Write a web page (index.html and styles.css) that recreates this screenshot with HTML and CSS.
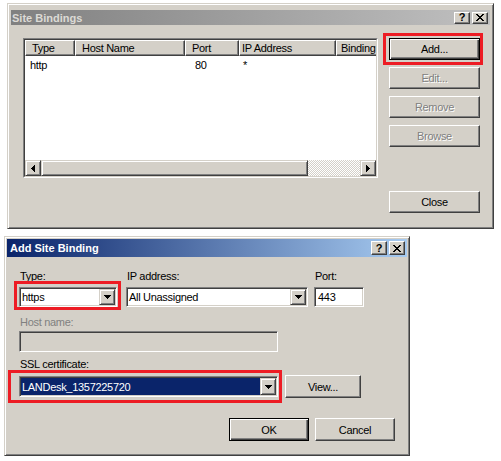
FILE: index.html
```html
<!DOCTYPE html>
<html>
<head>
    <meta charset="utf-8">
    <title>Site Bindings</title>
    <link rel="stylesheet" href="styles.css">
</head>
<body>
    <div class="window bindings-window">
        <div class="caption inactive">
            <span class="caption-title">Site Bindings</span>
            <div class="caption-buttons">
                <span class="cap-btn help">?</span>
                <span class="cap-btn">
                    <svg width="8" height="7" viewBox="0 0 8 7"><path d="M0 0h2v1h-2zM6 0h2v1h-2zM1 1h2v1h-2zM5 1h2v1h-2zM2 2h4v1h-4zM3 3h2v1h-2zM2 4h4v1h-4zM1 5h2v1h-2zM5 5h2v1h-2zM0 6h2v1h-2zM6 6h2v1h-2z" fill="#000"/></svg>
                </span>
            </div>
        </div>

        <div class="bindings-body">
            <div class="listview">
                <div class="lv-inner">
                    <div class="lv-header">
                        <div class="lv-col col-type">Type</div>
                        <div class="lv-col col-host">Host Name</div>
                        <div class="lv-col col-port">Port</div>
                        <div class="lv-col col-ip">IP Address</div>
                        <div class="lv-col col-binding">Binding</div>
                    </div>
                    <div class="lv-rows">
                        <div class="lv-row">
                            <div class="lv-cell col-type">http</div>
                            <div class="lv-cell col-host"></div>
                            <div class="lv-cell col-port">80</div>
                            <div class="lv-cell col-ip">*</div>
                            <div class="lv-cell col-binding"></div>
                        </div>
                    </div>
                    <div class="hscroll">
                        <span class="scroll-btn">
                            <svg width="4" height="7" viewBox="0 0 4 7"><path d="M3 0h1v7h-1v-1h-1v-1h-1v-1h-1v-1h1v-1h1v-1h1z" fill="#000"/></svg>
                        </span>
                        <span class="scroll-thumb"></span>
                        <span class="scroll-track"></span>
                        <span class="scroll-btn">
                            <svg width="4" height="7" viewBox="0 0 4 7"><path d="M0 0h1v1h1v1h1v1h1v1h-1v1h-1v1h-1v1h-1z" fill="#000"/></svg>
                        </span>
                    </div>
                </div>
            </div>

            <div class="button-column">
                <div class="btn default">Add...</div>
                <div class="btn disabled">Edit...</div>
                <div class="btn disabled">Remove</div>
                <div class="btn disabled">Browse</div>
                <div class="btn close-btn">Close</div>
            </div>
        </div>

        <div class="callout add-callout"></div>
    </div>

    <div class="window add-window">
        <div class="caption active">
            <span class="caption-title">Add Site Binding</span>
            <div class="caption-buttons">
                <span class="cap-btn help">?</span>
                <span class="cap-btn">
                    <svg width="8" height="7" viewBox="0 0 8 7"><path d="M0 0h2v1h-2zM6 0h2v1h-2zM1 1h2v1h-2zM5 1h2v1h-2zM2 2h4v1h-4zM3 3h2v1h-2zM2 4h4v1h-4zM1 5h2v1h-2zM5 5h2v1h-2zM0 6h2v1h-2zM6 6h2v1h-2z" fill="#000"/></svg>
                </span>
            </div>
        </div>

        <div class="add-body">
            <div class="field-row">
                <div class="field type-field">
                    <div class="label">Type:</div>
                    <div class="combo">
                        <span class="combo-text">https</span>
                        <span class="drop-btn"><svg width="7" height="4" viewBox="0 0 7 4"><path d="M0 0h7v1h-1v1h-1v1h-1v1h-1v-1h-1v-1h-1v-1h-1z" fill="#000"/></svg></span>
                    </div>
                </div>
                <div class="field ip-field">
                    <div class="label">IP address:</div>
                    <div class="combo">
                        <span class="combo-text">All Unassigned</span>
                        <span class="drop-btn"><svg width="7" height="4" viewBox="0 0 7 4"><path d="M0 0h7v1h-1v1h-1v1h-1v1h-1v-1h-1v-1h-1v-1h-1z" fill="#000"/></svg></span>
                    </div>
                </div>
                <div class="field port-field">
                    <div class="label">Port:</div>
                    <div class="textbox">443</div>
                </div>
            </div>

            <div class="label disabled-label host-label">Host name:</div>
            <div class="textbox disabled host-box"></div>

            <div class="label ssl-label">SSL certificate:</div>
            <div class="ssl-row">
                <div class="combo ssl-combo">
                    <span class="combo-text selected">LANDesk_1357225720</span>
                    <span class="drop-btn"><svg width="7" height="4" viewBox="0 0 7 4"><path d="M0 0h7v1h-1v1h-1v1h-1v1h-1v-1h-1v-1h-1v-1h-1z" fill="#000"/></svg></span>
                </div>
                <div class="btn view-btn">View...</div>
            </div>

            <div class="dialog-buttons">
                <div class="btn default ok-btn">OK</div>
                <div class="btn cancel-btn">Cancel</div>
            </div>
        </div>

        <div class="callout type-callout"></div>
        <div class="callout ssl-callout"></div>
    </div>
</body>
</html>
```

FILE: styles.css
```css
* {
    box-sizing: border-box;
}

body {
    margin: 0;
    width: 501px;
    height: 461px;
    overflow: hidden;
    background: #fff;
    font-family: "Liberation Sans", Arial, sans-serif;
    font-size: 11px;
    letter-spacing: -0.3px;
    color: #000;
}

/* classic window frame */
.window {
    position: relative;
    background: #d4d0c8;
    border: 1px solid;
    border-color: #d4d0c8 #404040 #404040 #d4d0c8;
    box-shadow: inset 1px 1px #fff, inset -1px -1px #808080;
}

.bindings-window {
    margin: 3px 0 0 7px;
    width: 487px;
    height: 226px;
    padding: 6px 3px 2px 3px;
}

.add-window {
    margin: 7px 0 0 4px;
    width: 406px;
    height: 220px;
    padding: 2px;
}

.caption {
    display: flex;
    align-items: center;
    justify-content: space-between;
    font-weight: bold;
    letter-spacing: 0;
    white-space: nowrap;
}

.caption.inactive {
    height: 15px;
    padding: 0 2px 0 1px;
    color: #dcdad5;
    background: linear-gradient(to right, #808080, #c0c0c0);
}

.caption.active {
    height: 18px;
    padding: 0 2px 0 3px;
    color: #fff;
    background: linear-gradient(to right, #0a246a, #a6caf0);
}

.caption-buttons {
    display: flex;
    gap: 2px;
}

.cap-btn {
    width: 16px;
    height: 14px;
    display: flex;
    align-items: center;
    justify-content: center;
    background: #d4d0c8;
    border: 1px solid;
    border-color: #fff #404040 #404040 #fff;
    box-shadow: inset -1px -1px #808080;
    color: #000;
    font-size: 11px;
    line-height: 1;
}

.inactive .cap-btn {
    height: 12px;
}

/* buttons */
.btn {
    display: flex;
    align-items: center;
    justify-content: center;
    height: 22px;
    background: #d4d0c8;
    border: 1px solid;
    border-color: #fff #404040 #404040 #fff;
    box-shadow: inset -1px -1px #808080;
}

.btn.default {
    border-color: #000;
    box-shadow: inset 1px 1px #fff, inset -1px -1px #404040, inset -2px -2px #808080;
}

.btn.disabled {
    color: #808080;
    text-shadow: 1px 1px #fff;
}

/* site bindings dialog */
.bindings-body {
    display: flex;
    padding: 13px 0 0 12px;
}

.listview {
    width: 355px;
    height: 140px;
    border: 1px solid;
    border-color: #808080 #fff #fff #808080;
}

.lv-inner {
    height: 100%;
    display: flex;
    flex-direction: column;
    overflow: hidden;
    background: #fff;
    border: 1px solid;
    border-color: #404040 #d4d0c8 #d4d0c8 #404040;
}

.lv-header,
.lv-row {
    display: flex;
    white-space: nowrap;
}

.lv-col {
    flex: none;
    height: 16px;
    line-height: 14px;
    padding-left: 6px;
    background: #d4d0c8;
    border: 1px solid;
    border-color: #fff #404040 #404040 #fff;
    box-shadow: inset -1px -1px #808080;
}

.lv-col.col-ip {
    padding-left: 2px;
}

.lv-col.col-binding {
    padding-left: 4px;
}

.lv-rows {
    flex: 1;
}

.lv-row {
    height: 17px;
    line-height: 17px;
    padding-top: 1px;
}

.lv-cell {
    flex: none;
    padding-left: 5px;
}

.lv-cell.col-port {
    padding-left: 10px;
}

.lv-cell.col-ip {
    padding-left: 4px;
}

.col-type { width: 50px; }
.col-host { width: 110px; }
.col-port { width: 54px; }
.col-ip { width: 97px; }
.col-binding { width: 80px; }

.hscroll {
    display: flex;
    height: 16px;
    flex: none;
}

.scroll-btn,
.scroll-thumb {
    display: flex;
    align-items: center;
    justify-content: center;
    background: #d4d0c8;
    border: 1px solid;
    border-color: #d4d0c8 #404040 #404040 #d4d0c8;
    box-shadow: inset 1px 1px #fff, inset -1px -1px #808080;
}

.scroll-btn {
    width: 16px;
}

.scroll-thumb {
    width: 267px;
}

.scroll-track {
    flex: 1;
    background-color: #fff;
    background-image: repeating-conic-gradient(#d4d0c8 0% 25%, #fff 0% 50%);
    background-size: 2px 2px;
}

.button-column {
    display: flex;
    flex-direction: column;
    gap: 7px;
    width: 91px;
    margin-left: 11px;
}

.close-btn {
    margin-top: 37px;
}

/* add site binding dialog */
.add-body {
    padding: 13px 12px 0 12px;
}

.field-row {
    display: flex;
}

.ip-field {
    margin-left: 9px;
}

.port-field {
    margin-left: 6px;
}

.type-field { width: 98px; }
.ip-field { width: 182px; }
.port-field { width: 50px; }

.label {
    line-height: 13px;
    padding-left: 1px;
    margin-bottom: 4px;
    white-space: nowrap;
}

.disabled-label {
    color: #808080;
}

.combo,
.textbox {
    display: flex;
    height: 20px;
    padding: 1px;
    background: #fff;
    border: 1px solid;
    border-color: #808080 #fff #fff #808080;
    box-shadow: inset 1px 1px #404040, inset -1px -1px #d4d0c8;
}

.combo-text {
    flex: 1;
    display: flex;
    align-items: center;
    padding-left: 1px;
    white-space: nowrap;
    overflow: hidden;
}

.combo-text.selected {
    background: #0a246a;
    color: #fff;
}

.drop-btn {
    width: 16px;
    display: flex;
    align-items: center;
    justify-content: center;
    background: #d4d0c8;
    border: 1px solid;
    border-color: #d4d0c8 #404040 #404040 #d4d0c8;
    box-shadow: inset 1px 1px #fff, inset -1px -1px #808080;
}

.textbox {
    align-items: center;
    padding-left: 3px;
}

.textbox.disabled {
    background: #d4d0c8;
}

.host-label {
    margin-top: 9px;
    margin-bottom: 2px;
}

.host-box {
    width: 259px;
    height: 21px;
}

.ssl-label {
    margin-top: 6px;
}

.ssl-row {
    display: flex;
    align-items: center;
    gap: 7px;
    height: 23px;
}

.ssl-combo {
    width: 259px;
    height: 21px;
}

.view-btn {
    width: 76px;
    height: 23px;
}

.dialog-buttons {
    display: flex;
    justify-content: flex-end;
    gap: 6px;
    margin-top: 20px;
}

.ok-btn,
.cancel-btn {
    width: 80px;
    height: 23px;
}

/* red annotation boxes */
.callout {
    position: absolute;
    border: 3px solid #ed1c24;
}

.add-callout {
    left: 375px;
    top: 29px;
    width: 100px;
    height: 32px;
}

.type-callout {
    left: 9px;
    top: 44px;
    width: 107px;
    height: 29px;
}

.ssl-callout {
    left: 3px;
    top: 133px;
    width: 274px;
    height: 33px;
}
```
